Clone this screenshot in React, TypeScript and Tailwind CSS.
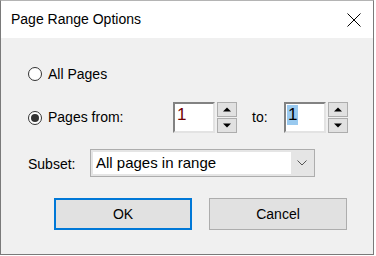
const font = { fontFamily: '"Liberation Sans", Arial, sans-serif' };

function Radio({ checked }: { checked?: boolean }) {
  return (
    <span className="flex h-[14px] w-[14px] shrink-0 items-center justify-center rounded-full border border-[#333333] bg-white">
      {checked && <span className="h-[8px] w-[8px] rounded-full bg-[#333333]" />}
    </span>
  );
}

function Spinner() {
  const btn = "flex h-[15px] w-[20px] items-center justify-center border border-[#adadad] bg-[#e1e1e1]";
  return (
    <div className="ml-[2px] flex h-[31px] flex-col justify-between">
      <div className={btn}>
        <svg width="8" height="5" viewBox="0 0 8 5"><path d="M0 4.5 L4 0.5 L8 4.5 Z" fill="#000" /></svg>
      </div>
      <div className={btn}>
        <svg width="8" height="5" viewBox="0 0 8 5"><path d="M0 0.5 L4 4.5 L8 0.5 Z" fill="#000" /></svg>
      </div>
    </div>
  );
}

function NumBox({ selected }: { selected?: boolean }) {
  return (
    <div className="h-[31px] w-[42px] border-2 border-[#828282] border-b-[#e3e3e3] border-r-[#e3e3e3] bg-white pl-[1px] pt-[1px]">
      {selected ? (
        <span className="inline-block h-[20px] bg-[#99c9ef] px-[1px] text-[17px] leading-[20px] text-black">1</span>
      ) : (
        <span className="inline-block h-[20px] px-[1px] text-[17px] leading-[20px] text-[#700000]">1</span>
      )}
    </div>
  );
}

export default function App() {
  return (
    <div className="h-[256px] w-[376px] bg-white" style={font}>
      <div className="flex h-[255px] w-[374px] flex-col border border-[#7a7a7a] border-t-[#b4b4b4] bg-[#f0f0f0] text-[14px] text-black">
        {/* title bar */}
        <div className="flex h-[37px] items-center justify-between bg-white pl-[10px] pr-[12px]">
          <span className="text-[14px]">Page Range Options</span>
          <svg width="14" height="14" viewBox="0 0 14 14">
            <path d="M0.5 0.5 L13.5 13.5 M13.5 0.5 L0.5 13.5" stroke="#000" strokeWidth="1" />
          </svg>
        </div>

        {/* body */}
        <div className="flex flex-col pl-[27px]">
          <div className="mt-[26px] flex h-[20px] items-center">
            <Radio />
            <span className="ml-[6px]">All Pages</span>
          </div>

          <div className="mt-[18px] flex h-[31px] items-center">
            <div className="flex w-[145px] items-center">
              <Radio checked />
              <span className="ml-[6px]">Pages from:</span>
            </div>
            <NumBox />
            <Spinner />
            <span className="ml-[15px] w-[32px]">to:</span>
            <NumBox selected />
            <Spinner />
          </div>

          <div className="mt-[16px] flex h-[28px] items-center">
            <span className="mt-[3px] w-[62px]">Subset:</span>
            <div className="flex h-[28px] w-[225px] items-center border border-[#adadad] bg-[#e5e5e5] p-[2px]">
              <div className="flex h-full w-[198px] items-center bg-white pl-[3px] text-[15px]">All pages in range</div>
              <div className="flex flex-1 items-center justify-center">
                <svg width="10" height="6" viewBox="0 0 10 6">
                  <path d="M0.5 0.5 L5 5 L9.5 0.5" fill="none" stroke="#555" strokeWidth="1" />
                </svg>
              </div>
            </div>
          </div>

          <div className="ml-[26px] mt-[21px] flex h-[32px] gap-[17px]">
            <button className="h-[32px] w-[138px] border-2 border-[#0078d7] bg-[#e1e1e1]">OK</button>
            <button className="h-[32px] w-[138px] border border-[#adadad] bg-[#e1e1e1]">Cancel</button>
          </div>
        </div>
      </div>
    </div>
  );
}
